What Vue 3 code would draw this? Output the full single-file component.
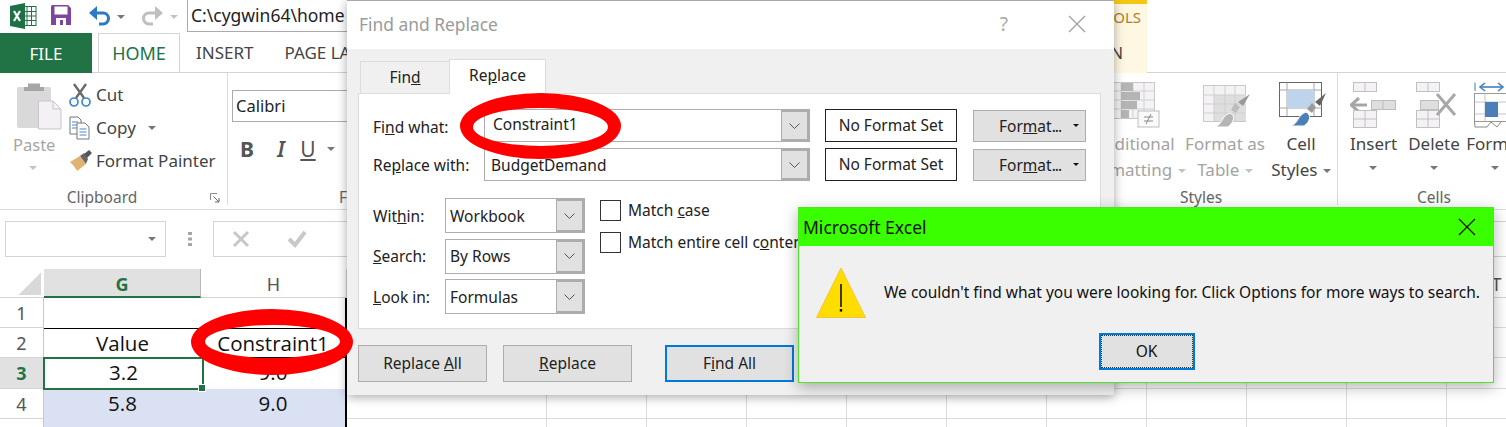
<script setup>
const cols = ['G', 'H', '', '', '', '', '', '', '', '', '', '', '', 'T']
const rows = [
  { n: 1, cells: ['', ''] },
  { n: 2, cells: ['Value', 'Constraint1'] },
  { n: 3, cells: ['3.2', '9.0'] },
  { n: 4, cells: ['5.8', '9.0'] },
  { n: '', cells: ['', ''] },
]
function cellClass(rowIndex, colIndex) {
  const inTable = colIndex < 2
  return {
    cell: true,
    grid: !inTable && colIndex !== 2,
    under: colIndex === 2,
    plain: inTable,
    blackTop: inTable && rowIndex === 1,
    blackBottom: colIndex === 1 && rowIndex === 1,
    selected: rowIndex === 2 && colIndex === 0,
    band: inTable && rowIndex >= 3,
    blackRight: colIndex === 1,
  }
}
</script>

<template>
  <div class="app">
    <div class="top">
      <div class="topLeft">
        <div class="qat">
          <svg class="logo" width="27" height="26" viewBox="0 0 27 26">
            <rect x="13" y="3.5" width="13" height="19" fill="#fff" stroke="#217346" />
            <path d="M17 3.5V22.5M21.5 3.500V22.500M13 8.500H26M13 13H26M13 17.500H26" stroke="#217346" fill="none" />
            <path d="M0 3 15 0V26L0 23z" fill="#1e7145" />
            <path d="M4 8 10 18M10 8 4 18" stroke="#fff" stroke-width="2.2" fill="none" />
          </svg>
          <svg class="save" width="20" height="20" viewBox="0 0 20 20">
            <path d="M0 1.500A1.500 1.500 0 0 1 1.500 0H17L20 3V20H0z" fill="#7e449e" />
            <rect x="3.500" y="1.500" width="13" height="8" fill="#fff" />
            <rect x="5" y="13" width="10" height="7" fill="#fff" />
            <rect x="9" y="15" width="3" height="5" fill="#7e449e" />
          </svg>
          <svg class="undo" width="24" height="20" viewBox="0 0 24 20">
            <path d="M3 7H15A5.500 5.500 0 0 1 15 18H11" fill="none" stroke="#2b7ac4" stroke-width="3" />
            <path d="M9 0V14L1 7z" fill="#2b7ac4" />
          </svg>
          <span class="caret qatCaret"></span>
          <svg class="redo" width="24" height="20" viewBox="0 0 24 20">
            <path d="M21 7H9A5.500 5.500 0 0 0 9 18H13" fill="none" stroke="#bfbfbf" stroke-width="3" />
            <path d="M15 0V14L23 7z" fill="#bfbfbf" />
          </svg>
          <span class="caret qatCaret light"></span>
          <div class="pathBox">C:\cygwin64\home</div>
        </div>
        <div class="tabs">
          <div class="fileTab">FILE</div>
          <div class="homeTab">HOME</div>
          <div class="tab">INSERT</div>
          <div class="tab pageTab">PAGE LAYOUT</div>
        </div>
      </div>
      <div class="context">
        <div class="contextTitle">TABLE TOOLS</div>
        <div class="contextTab">DESIGN</div>
      </div>
      <div class="topRight"></div>
    </div>

    <div class="ribbon">
      <section class="group clipboard">
        <div class="groupMain clipMain">
          <div class="pasteCol">
            <svg width="45" height="47" viewBox="0 0 45 47">
              <rect x="0" y="4" width="34" height="41" rx="2" fill="#d9d9d9" />
              <path d="M11 4V0.500H23V4H27V8H7V4z" fill="#a6a6a6" />
              <path d="M21.500 18H36L44 26V46H21.500z" fill="#f5f0f6" stroke="#c6c6c6" />
              <path d="M36 18V26H44" fill="none" stroke="#c6c6c6" />
            </svg>
            <div class="pasteLabel">Paste</div>
            <span class="caret light"></span>
          </div>
          <div class="clipCol">
            <div class="clipRow">
              <svg width="22" height="24" viewBox="0 0 22 24">
                <path d="M5 1 15 15M17 1 7 15" stroke="#6a6a6a" stroke-width="2.400" fill="none" />
                <circle cx="5" cy="19" r="4" fill="none" stroke="#3f87c7" stroke-width="1.700" />
                <circle cx="17" cy="19" r="4" fill="none" stroke="#3f87c7" stroke-width="1.700" />
              </svg>
              <span>Cut</span>
            </div>
            <div class="clipRow">
              <svg width="22" height="24" viewBox="0 0 22 24">
                <path d="M1 1H9L12 4V18H1z" fill="#fff" stroke="#777" />
                <path d="M3 6H9M3 9H9M3 12H9" stroke="#4a86c5" />
                <path d="M8 7H16L20 11V23H8z" fill="#fff" stroke="#777" />
                <path d="M10.500 13H17.500M10.500 16H17.500M10.500 19H17.500" stroke="#4a86c5" />
              </svg>
              <span>Copy</span>
              <span class="caret copyCaret"></span>
            </div>
            <div class="clipRow painter">
              <svg width="24" height="22" viewBox="0 0 24 22">
                <path d="M1 12 11 6 17 14 8 21C7 19 5 16 1 12z" fill="#e2b273" />
                <path d="M11 6 15 3 19 9 17 14z" fill="#666" />
                <path d="M15 4 20 0 23 3 18 8z" fill="#555" />
              </svg>
              <span>Format Painter</span>
            </div>
          </div>
        </div>
        <div class="groupLabel clipLabel">
          Clipboard
          <svg class="launcher" width="10" height="10" viewBox="0 0 10 10">
            <path d="M.5 7V.5H7" fill="none" stroke="#8a8a8a" />
            <path d="M3.500 3.500 9 9M9 5V9H5" fill="none" stroke="#666" />
          </svg>
        </div>
      </section>

      <section class="group font">
        <div class="groupMain fontMain">
          <div class="fontBox">Calibri</div>
          <div class="fontStyles">
            <b class="fmt">B</b>
            <i class="fmt italic">I</i>
            <u class="fmt under2">U</u>
            <span class="caret"></span>
          </div>
        </div>
        <div class="groupLabel fontLabel">Font</div>
      </section>

      <section class="group styles">
        <div class="groupMain toolRow">
          <div class="tool condTool muted">
            <svg class="toolIcon" width="80" height="46" viewBox="0 0 80 46">
              <g transform="translate(21 0)">
                <rect x=".5" y=".5" width="45" height="36" fill="#f5f2f6" stroke="#c8c8c8" />
                <path d="M12 .5V36M24 .5V36M35 .5V36M.5 9H45M.5 18H45M.5 27H45" stroke="#d0d0d0" />
                <rect x="12" y="1" width="12" height="8" fill="#b4b4b4" />
                <rect x="12" y="10" width="19" height="8" fill="#b4b4b4" />
                <rect x="12" y="19" width="16" height="8" fill="#b4b4b4" />
                <rect x="12" y="28" width="8" height="8" fill="#b4b4b4" />
                <rect x="29" y="29" width="21" height="16" fill="#fafafa" stroke="#bdbdbd" />
                <path d="M35 35H44M35 39H44M37 42 42 32" stroke="#8a8a8a" />
              </g>
            </svg>
            <div>Conditional</div>
            <div>Formatting <span class="caret inline light"></span></div>
          </div>
          <div class="tool tableTool muted">
            <svg class="toolIcon" width="48" height="46" viewBox="0 0 48 46">
              <rect x=".5" y="3.500" width="42" height="36" fill="#f5f2f6" stroke="#c8c8c8" />
              <rect x="11" y="13" width="32" height="26" fill="#dedede" />
              <path d="M11 3.500V39M22 3.500V39M32 3.500V39M.5 13H42M.5 22H42M.5 31H42" stroke="#cfcfcf" />
              <path d="M47 12 40 24 35 20z" fill="#9a9a9a" />
              <path d="M37 25 32 21 28 28 33 31z" fill="#bdbdbd" />
              <path d="M12 45C20 42 18 34 27 31 33 34 31 40 25 45z" fill="#b5b5b5" stroke="#fff" />
            </svg>
            <div>Format as</div>
            <div>Table <span class="caret inline light"></span></div>
          </div>
          <div class="tool cellTool">
            <svg class="toolIcon" width="48" height="46" viewBox="0 0 48 46">
              <rect x=".5" y=".5" width="42" height="34" fill="#fff" stroke="#666" />
              <path d="M.5 8H42M.5 26H42M8 .5V34M35 .5V34" stroke="#a5a5a5" />
              <rect x="8" y="8" width="27" height="18" fill="#bdd4ea" />
              <path d="M47 11 41 24 36 20z" fill="#666" />
              <path d="M37 25 33 21 28 27 33 31z" fill="#9a9a9a" />
              <path d="M11 44C20 42 18 33 27 30 33 33 31 40 25 44z" fill="#4a7fb8" stroke="#fff" />
            </svg>
            <div>Cell</div>
            <div>Styles <span class="caret inline"></span></div>
          </div>
        </div>
        <div class="groupLabel stylesLabel">Styles</div>
      </section>

      <section class="group cells">
        <div class="groupMain toolRow">
          <div class="tool insertTool">
            <svg class="toolIcon" width="46" height="46" viewBox="0 0 46 46">
              <rect x="3.500" y=".5" width="23" height="9" fill="#f5f2f6" stroke="#c0c0c0" />
              <path d="M15 .5V9.500" stroke="#c0c0c0" />
              <rect x="21.500" y="18.500" width="24" height="9" fill="#dedede" stroke="#bdbdbd" />
              <path d="M33 18.500V27.500" stroke="#bdbdbd" />
              <path d="M1 23H17" stroke="#a6a6a6" stroke-width="3" />
              <path d="M9 16 1 23 9 30" stroke="#a6a6a6" stroke-width="3" fill="none" />
              <rect x="3.500" y="28.500" width="23" height="17" fill="#f5f2f6" stroke="#c0c0c0" />
              <path d="M15 28.500V45M3.500 37H26" stroke="#c0c0c0" />
            </svg>
            <div>Insert</div>
            <span class="caret toolCaret"></span>
          </div>
          <div class="tool deleteTool">
            <svg class="toolIcon" width="46" height="46" viewBox="0 0 46 46">
              <rect x="5.500" y=".5" width="23" height="9" fill="#f5f2f6" stroke="#c0c0c0" />
              <path d="M17 .5V9.500" stroke="#c0c0c0" />
              <rect x="9.500" y="18.500" width="18" height="9" fill="#dedede" stroke="#bdbdbd" />
              <rect x="5.500" y="28.500" width="23" height="17" fill="#f5f2f6" stroke="#c0c0c0" />
              <path d="M17 28.500V45M5.500 37H28" stroke="#c0c0c0" />
              <path d="M26 12 44 33M44 12 26 33" stroke="#a8a8a8" stroke-width="3" />
            </svg>
            <div>Delete</div>
            <span class="caret toolCaret"></span>
          </div>
          <div class="tool formatTool">
            <svg class="toolIcon" width="46" height="46" viewBox="0 0 46 46">
              <path d="M1 .5V9" stroke="#3f7fbf" />
              <path d="M7 5H28" stroke="#3f7fbf" stroke-width="1.600" />
              <path d="M11 1 6 5 11 9M24 1 29 5 24 9" stroke="#3f7fbf" stroke-width="1.600" fill="none" />
              <rect x=".5" y="11.500" width="44" height="28" fill="#fff" stroke="#999" />
              <path d="M11 11.500V39M.5 20H45M.5 32H45" stroke="#c4c4c4" />
              <rect x="11" y="20" width="13" height="15" fill="#4a7fb8" />
              <path d="M.5 39 1 45H13L17 40 23 45 27 40" fill="none" stroke="#888" />
            </svg>
            <div>Format</div>
            <span class="caret toolCaret"></span>
          </div>
        </div>
        <div class="groupLabel cellsLabel">Cells</div>
      </section>
    </div>

    <div class="formulaBar">
      <div class="nameBox"><span class="caret"></span></div>
      <svg class="dots" width="4" height="14" viewBox="0 0 4 14">
        <path d="M0 0H4V3H0zM0 5.500H4V8.500H0zM0 11H4V14H0z" fill="#a6a6a6" />
      </svg>
      <div class="formulaBox">
        <svg class="fx" width="18" height="18" viewBox="0 0 18 18">
          <path d="M2 2 16 16M16 2 2 16" stroke="#c8c8c8" stroke-width="3" />
        </svg>
        <svg class="fx check" width="20" height="18" viewBox="0 0 20 18">
          <path d="M2 9 8 15 18 2" stroke="#c8c8c8" stroke-width="4" fill="none" />
        </svg>
      </div>
    </div>

    <div class="sheet">
      <div class="corner"></div>
      <div v-for="(c, i) in cols" :key="'h' + i" class="colHead" :class="{ activeCol: i === 0, boldCol: i === 0 }">{{ c }}</div>
      <template v-for="(row, r) in rows" :key="'r' + r">
        <div class="rowHead" :class="{ activeRow: r === 2 }">{{ row.n }}</div>
        <div v-for="(c, i) in cols" :key="'c' + i" :class="cellClass(r, i)">
          {{ row.cells[i] }}
          <span v-if="r === 2 && i === 0" class="handle"></span>
        </div>
      </template>
    </div>

    <div class="findDialog">
      <header class="findTitle">
        <span>Find and Replace</span>
        <span class="help">?</span>
        <svg width="18" height="18" viewBox="0 0 18 18"><path d="M1 1 17 17M17 1 1 17" stroke="#a0a0a0" stroke-width="1.200" /></svg>
      </header>
      <div class="findBody">
        <div class="dlgTabs">
          <div class="dlgTab">Fin<u>d</u></div>
          <div class="dlgTab active">Re<u>p</u>lace</div>
        </div>
        <div class="panel">
          <div class="fieldRow">
            <label class="fieldLabel">Fi<u>n</u>d what:</label>
            <div class="combo wide"><span class="indent">Constraint1</span>
              <span class="arrowBtn"><svg width="11" height="6" viewBox="0 0 11 6"><path d="M.5.5 5.500 5.500 10.500.5" fill="none" stroke="#555" /></svg></span>
            </div>
            <div class="noFormat">No Format Set</div>
            <div class="formatBtn">For<u>m</u>at<span class="tightDots">...</span><span class="caret black"></span></div>
          </div>
          <div class="fieldRow">
            <label class="fieldLabel">Re<u>p</u>lace with:</label>
            <div class="combo wide"><span class="indentSmall">BudgetDemand</span>
              <span class="arrowBtn"><svg width="11" height="6" viewBox="0 0 11 6"><path d="M.5.5 5.500 5.500 10.500.5" fill="none" stroke="#555" /></svg></span>
            </div>
            <div class="noFormat">No Format Set</div>
            <div class="formatBtn">For<u>m</u>at<span class="tightDots">...</span><span class="caret black"></span></div>
          </div>
          <div class="lower">
            <div class="selects">
              <div class="selectRow">
                <label class="selLabel">Wit<u>h</u>in:</label>
                <div class="combo narrow"><span>Workbook</span>
                  <span class="arrowBtn"><svg width="11" height="6" viewBox="0 0 11 6"><path d="M.5.5 5.500 5.500 10.500.5" fill="none" stroke="#555" /></svg></span>
                </div>
              </div>
              <div class="selectRow">
                <label class="selLabel"><u>S</u>earch:</label>
                <div class="combo narrow"><span>By Rows</span>
                  <span class="arrowBtn"><svg width="11" height="6" viewBox="0 0 11 6"><path d="M.5.5 5.500 5.500 10.500.5" fill="none" stroke="#555" /></svg></span>
                </div>
              </div>
              <div class="selectRow">
                <label class="selLabel"><u>L</u>ook in:</label>
                <div class="combo narrow"><span>Formulas</span>
                  <span class="arrowBtn"><svg width="11" height="6" viewBox="0 0 11 6"><path d="M.5.5 5.500 5.500 10.500.5" fill="none" stroke="#555" /></svg></span>
                </div>
              </div>
            </div>
            <div class="checks">
              <div class="checkRow"><span class="checkbox"></span><span>Match <u>c</u>ase</span></div>
              <div class="checkRow"><span class="checkbox"></span><span class="clipped">Match entire cell c<u>o</u>ntents</span></div>
            </div>
          </div>
        </div>
        <div class="dlgButtons">
          <div class="dlgBtn">Replace <u>A</u>ll</div>
          <div class="dlgBtn">
            <span><u>R</u>eplace</span>
          </div>
          <div class="dlgBtn primary">F<u>i</u>nd All</div>
        </div>
      </div>
    </div>

    <div class="alertDialog">
      <header class="alertTitle">
        <span>Microsoft Excel</span>
        <svg width="18" height="18" viewBox="0 0 18 18"><path d="M1 1 17 17M17 1 1 17" stroke="#111" stroke-width="1.200" /></svg>
      </header>
      <div class="alertBody">
        <div class="alertMsg">
          <svg width="50" height="51" viewBox="0 0 50 51">
            <path d="M25 1 49.500 50.500H.5z" fill="#ffdd00" stroke="#f3c53a" />
            <path d="M25 17V40" stroke="#111" stroke-width="1.600" />
            <rect x="23.800" y="42" width="2.400" height="2.600" fill="#111" />
          </svg>
          <p>We couldn't find what you were looking for. Click Options for more ways to search.</p>
        </div>
        <div class="okWrap"><div class="okBtn">OK</div></div>
      </div>
    </div>

    <svg class="ring ringSheet" width="166" height="70" viewBox="0 0 166 70">
      <path fill="#ff0000" fill-rule="evenodd" d="M2 35a81 33 0 1 0 162 0a81 33 0 1 0 -162 0zM16 34.500a67.500 16.500 0 1 0 135 0a67.500 16.500 0 1 0 -135 0z" />
    </svg>
    <svg class="ring ringFind" width="166" height="70" viewBox="0 0 166 70">
      <path fill="#ff0000" fill-rule="evenodd" d="M2 35a80.500 33 0 1 0 161 0a80.500 33 0 1 0 -161 0zM15 36a67.500 19 0 1 0 135 0a67.500 19 0 1 0 -135 0z" />
    </svg>
  </div>
</template>

<style scoped>
.app {
  position: relative;
  width: 1506px;
  height: 427px;
  overflow: hidden;
  background: #fff;
  font-family: "Noto Sans", "Open Sans", sans-serif;
  font-size: 15.500px;
  color: #444;
}
svg { display: block; flex: none; }
.caret {
  display: inline-block;
  width: 0;
  height: 0;
  border-left: 4.500px solid transparent;
  border-right: 4.500px solid transparent;
  border-top: 4.500px solid #777;
}
.caret.light { border-top-color: #c4c4c4; }
.caret.black { border-top-color: #111; }
.caret.inline { vertical-align: 3px; margin-left: 1px; }

.top { display: flex; height: 73px; }
.topLeft { width: 1037px; flex: none; display: flex; flex-direction: column; }
.qat { height: 34px; display: flex; align-items: center; overflow: hidden; }
.logo { margin: 0 0 2px 10px; }
.save { margin: 0 0 4px 14px; }
.undo { margin: 0 0 2px 17px; }
.qatCaret { margin: 0 0 0 5px; }
.qatCaret.light { margin: 0 0 0 6px; }
.redo { margin: 0 0 2px 15px; }
.pathBox {
  box-sizing: border-box;
  margin: 0 0 2px 9px;
  width: 800px;
  height: 32px;
  border: 1px solid #ababab;
  border-top: 0;
  padding: 0 0 2px 3px;
  line-height: 31px;
  font-size: 17.500px;
  color: #222;
}
.tabs {
  flex: 1;
  display: flex;
  border-bottom: 1px solid #d4d4d4;
  font-size: 17px;
}
.fileTab {
  width: 92px;
  margin-bottom: -1px;
  background: #217346;
  color: #fff;
  display: flex;
  align-items: center;
  justify-content: center;
}
.homeTab {
  box-sizing: border-box;
  margin-left: 6px;
  width: 82px;
  height: 39px;
  border: 1px solid #d4d4d4;
  border-bottom: 0;
  background: #fff;
  color: #217346;
  line-height: 39px;
  text-align: center;
  font-size: 18px;
}
.tab { padding: 0 15px 0 16px; line-height: 39px; white-space: nowrap; }
.pageTab { padding-left: 16px; }
.context {
  width: 110px;
  flex: none;
  background: #fef8e3;
  border-top: 4px solid #f4c715;
  box-sizing: border-box;
  text-align: right;
  white-space: nowrap;
  display: flex;
  flex-direction: column;
}
.contextTitle { height: 30px; line-height: 27px; padding-right: 6px; font-size: 15px; color: #b77a1c; }
.contextTab { line-height: 40px; padding-right: 24px; font-size: 16.500px; }
.topRight { flex: 1; border-bottom: 1px solid #d4d4d4; }

.ribbon { display: flex; height: 137px; border-bottom: 1px solid #dcdcdc; box-sizing: border-box; }
.group { display: flex; flex-direction: column; box-sizing: border-box; flex: none; }
.groupMain { flex: 1; min-height: 0; }
.groupLabel {
  box-sizing: border-box;
  height: 28px;
  padding-top: 8px;
  line-height: 24px;
  text-align: center;
  color: #666;
  font-size: 15.500px;
  position: relative;
}
.clipboard { width: 228px; border-right: 1px solid #dcdcdc; height: 132px; }
.clipMain { display: flex; }
.pasteCol {
  width: 68px;
  padding: 10px 0 0 17px;
  box-sizing: border-box;
  color: #a6a6a6;
  font-size: 16.500px;
}
.pasteLabel { margin: 3px 0 0 -4px; line-height: 24px; }
.pasteCol .caret { margin: 9px 0 0 12px; display: block; }
.clipCol { display: flex; flex-direction: column; padding-top: 5px; }
.clipRow {
  height: 34.500px;
  display: flex;
  align-items: center;
  gap: 5px;
  margin-left: 1px;
  font-size: 17px;
  white-space: nowrap;
}
.clipRow.painter { gap: 3px; }
.copyCaret { margin-left: 7px; }
.clipLabel { padding-right: 23px; }
.launcher { position: absolute; right: 7px; top: 16px; }

.font { flex: 1; min-width: 0; height: 132px; }
.fontMain { padding: 17px 0 0 4px; }
.fontBox {
  box-sizing: border-box;
  width: 300px;
  height: 32px;
  border: 1px solid #ababab;
  line-height: 30px;
  padding-left: 3px;
  font-size: 16.500px;
  color: #222;
}
.fontStyles { display: flex; align-items: center; margin-top: 13px; font-size: 21px; }
.fmt { display: block; width: 30px; text-align: center; color: #555; }
.italic { margin-left: 4px; font-weight: 600; }
.under2 { margin-left: -3px; }
.fontStyles .caret { margin-left: 4px; }
.fontLabel { text-align: left; padding-left: 111px; }

.styles { width: 255px; height: 132px; border-right: 1px solid #dcdcdc; }
.cells { width: 168px; height: 132px; }
.toolRow { display: flex; }
.tool { flex: none; text-align: center; font-size: 17px; line-height: 26px; padding-top: 9px; box-sizing: border-box; white-space: nowrap; color: #444; }
.muted { color: #a3a3a3; }
.toolIcon { margin: 0 auto 3px; }
.condTool { width: 90px; }
.tableTool { width: 92px; margin-left: 6px; }
.tableTool .toolIcon { margin-left: 24px; }
.cellTool { width: 62px; margin-left: -1px; }
.cellTool .toolIcon { margin-left: 9px; }
.insertTool { width: 45px; margin-left: 12px; }
.deleteTool { width: 52px; margin-left: 13px; }
.formatTool { width: 60px; margin-left: 5px; }
.formatTool .toolIcon { margin-left: 9px; }
.toolCaret { display: block; margin: 9px auto 0; }
.stylesLabel { width: 236px; }
.cellsLabel { width: 192px; }

.formulaBar { height: 59px; display: flex; align-items: center; padding: 0 0 1px 5px; box-sizing: border-box; }
.nameBox {
  box-sizing: border-box;
  width: 161px;
  height: 36px;
  border: 1px solid #d4d4d4;
  display: flex;
  align-items: center;
  justify-content: flex-end;
  padding-right: 9px;
}
.dots { margin-left: 22px; }
.formulaBox {
  box-sizing: border-box;
  flex: 1;
  height: 36px;
  margin-left: 21px;
  border: 1px solid #d4d4d4;
  border-right: 0;
  display: flex;
  align-items: center;
  padding-left: 18px;
}
.check { margin-left: 37px; }

.sheet {
  display: grid;
  grid-template-columns: 44px 157px 146px 100px repeat(11, 100px);
  grid-template-rows: 29px 30px 30px 31px 30px 30px;
  font-family: "Open Sans", sans-serif;
  font-size: 20.500px;
  color: #111;
}
.corner {
  position: relative;
  border-bottom: 1px solid #d4d4d4;
  background: linear-gradient(135deg, #fff 0 50%, #d9d9d9 50%) 19px 4px / 22px 22px no-repeat;
}
.colHead {
  box-sizing: border-box;
  border-bottom: 1px solid #d4d4d4;
  border-right: 1px solid #d4d4d4;
  font-family: "Noto Sans", sans-serif;
  font-size: 18px;
  color: #555;
  line-height: 30px;
  text-align: center;
}
.activeCol { background: #e1e1e1; border-bottom: 2px solid #217346; color: #217346; border-right-color: #b8b8b8; }
.boldCol { font-weight: 700; }
.rowHead {
  box-sizing: border-box;
  border-bottom: 1px solid #d4d4d4;
  border-right: 1px solid #c8c8c8;
  font-family: "Noto Sans", sans-serif;
  font-size: 18px;
  color: #555;
  text-align: center;
  line-height: 30px;
}
.activeRow { background: #e1e1e1; color: #217346; font-weight: 700; }
.cell {
  box-sizing: border-box;
  position: relative;
  text-align: center;
  line-height: 29px;
  white-space: nowrap;
}
.grid { border-right: 1px solid #dcdcdc; border-bottom: 1px solid #dcdcdc; }
.under { border-bottom: 1px solid #dcdcdc; }
.blackTop { border-top: 1px solid #000; line-height: 28px; }
.blackBottom { border-bottom: 1px solid #000; }
.blackRight { border-right: 2px solid #000; }
.band { background: #d9e1f2; }
.selected {
  outline: 2px solid #217346;
  outline-offset: -1px;
  margin-right: -2px;
  z-index: 1;
  background: #fff;
}
.handle {
  position: absolute;
  right: -3px;
  bottom: -3px;
  width: 6px;
  height: 6px;
  background: #217346;
  border: 1px solid #fff;
}

.findDialog {
  position: absolute;
  left: 347px;
  top: 0;
  width: 767px;
  height: 395px;
  background: #f0f0f0;
  border-top: 1px solid #a8a8a8;
  box-sizing: border-box;
  box-shadow: 0 2px 10px rgba(0, 0, 0, .35);
  font-size: 15.500px;
  color: #222;
  display: flex;
  flex-direction: column;
}
.findTitle {
  height: 46px;
  flex: none;
  background: #fff;
  display: flex;
  align-items: center;
  padding: 0 28px 2px 12px;
  font-size: 17.400px;
  color: #9a9a9a;
}
.findTitle > span:first-child { flex: 1; }
.help { margin-right: 60px; font-size: 19px; color: #a8a8a8; }
.findBody { padding: 10px 13px 0 11px; flex: 1; }
.dlgTabs { display: flex; height: 34px; align-items: flex-end; margin-left: 2px; }
.dlgTab {
  box-sizing: border-box;
  width: 89px;
  height: 32px;
  border-top: 1px solid #dcdcdc;
  border-left: 1px solid #dcdcdc;
  text-align: center;
  line-height: 31px;
}
.dlgTab.active {
  width: 97px;
  height: 35px;
  margin-bottom: -1px;
  background: #fff;
  border: 1px solid #dcdcdc;
  border-bottom: 0;
  position: relative;
  z-index: 1;
}
.panel {
  box-sizing: border-box;
  height: 236px;
  background: #fff;
  border: 1px solid #dcdcdc;
  padding: 15px 0 0 14px;
}
.fieldRow { display: flex; align-items: center; height: 33px; margin-bottom: 6px; white-space: nowrap; }
.fieldLabel { width: 111px; flex: none; }
.fieldRow:first-child .fieldLabel { padding-top: 2px; }
.combo {
  box-sizing: border-box;
  display: flex;
  align-items: center;
  background: #fff;
  border: 1px solid #adadad;
  padding-left: 4px;
  flex: none;
}
.combo > span:first-child { flex: 1; }
.indent { padding: 0 0 3px 4px; }
.indentSmall { padding-left: 2px; }
.wide { width: 326px; height: 33px; }
.narrow { width: 140px; height: 35px; }
.arrowBtn {
  box-sizing: border-box;
  width: 28px;
  height: 100%;
  flex: none;
  background: #e1e1e1;
  border: 2px solid #adadad;
  border-left-width: 1px;
  display: flex;
  align-items: center;
  justify-content: center;
}
.noFormat {
  box-sizing: border-box;
  margin-left: 15px;
  width: 132px;
  height: 33px;
  border: 1.500px solid #222;
  text-align: center;
  line-height: 31px;
  flex: none;
}
.formatBtn {
  box-sizing: border-box;
  position: relative;
  margin-left: 16px;
  width: 113px;
  height: 32px;
  background: #e1e1e1;
  border: 1px solid #adadad;
  line-height: 30px;
  padding-left: 25px;
  flex: none;
}
.tightDots { letter-spacing: -1px; }
.formatBtn .caret {
  position: absolute;
  right: 6px;
  top: 13px;
  border-left-width: 3.500px;
  border-right-width: 3.500px;
  border-top-width: 3.500px;
}
.lower { display: flex; margin-top: 17px; }
.selects { display: flex; flex-direction: column; gap: 5.500px; }
.selectRow { display: flex; align-items: center; height: 35px; }
.selLabel { width: 72px; flex: none; }
.checks { margin: 2px 0 0 15px; display: flex; flex-direction: column; gap: 11px; }
.checkRow { display: flex; align-items: center; gap: 7px; height: 21px; line-height: 23px; white-space: nowrap; }
.checkbox { box-sizing: border-box; width: 21px; height: 21px; border: 1px solid #333; background: #fff; flex: none; }
.clipped { width: 170px; overflow: hidden; }
.dlgButtons { display: flex; margin-top: 16px; }
.dlgBtn {
  box-sizing: border-box;
  width: 129px;
  height: 37px;
  background: #e1e1e1;
  border: 1px solid #adadad;
  text-align: center;
  line-height: 35px;
  margin-right: 16px;
}
.dlgBtn.primary { margin: 0 0 0 17px; border: 2px solid #0078d7; line-height: 33px; }

.alertDialog {
  position: absolute;
  left: 798px;
  top: 207px;
  width: 696px;
  height: 176px;
  box-sizing: border-box;
  border: 1px solid #4fe32a;
  background: #f0f0f0;
  box-shadow: 0 4px 14px rgba(0, 0, 0, .3);
  color: #111;
  display: flex;
  flex-direction: column;
}
.alertTitle {
  height: 38px;
  flex: none;
  background: #39ff00;
  display: flex;
  justify-content: space-between;
  align-items: center;
  padding: 0 17px 0 4px;
  font-size: 17.500px;
}
.alertBody { flex: 1; display: flex; flex-direction: column; }
.alertMsg { display: flex; align-items: center; padding: 21px 0 0 17px; gap: 18px; }
.alertMsg p { margin: 0 0 2px; white-space: nowrap; font-size: 15.500px; }
.okWrap { display: flex; justify-content: center; margin-top: 15px; padding-left: 1px; }
.okBtn {
  box-sizing: border-box;
  width: 96px;
  height: 37px;
  background: #e1e1e1;
  border: 2px solid #0078d7;
  outline: 1px dotted #333;
  outline-offset: -3px;
  text-align: center;
  line-height: 33px;
}

.ring { position: absolute; z-index: 5; pointer-events: none; }
.ringSheet { left: 189px; top: 307px; }
.ringFind { left: 458px; top: 91px; }
</style>
